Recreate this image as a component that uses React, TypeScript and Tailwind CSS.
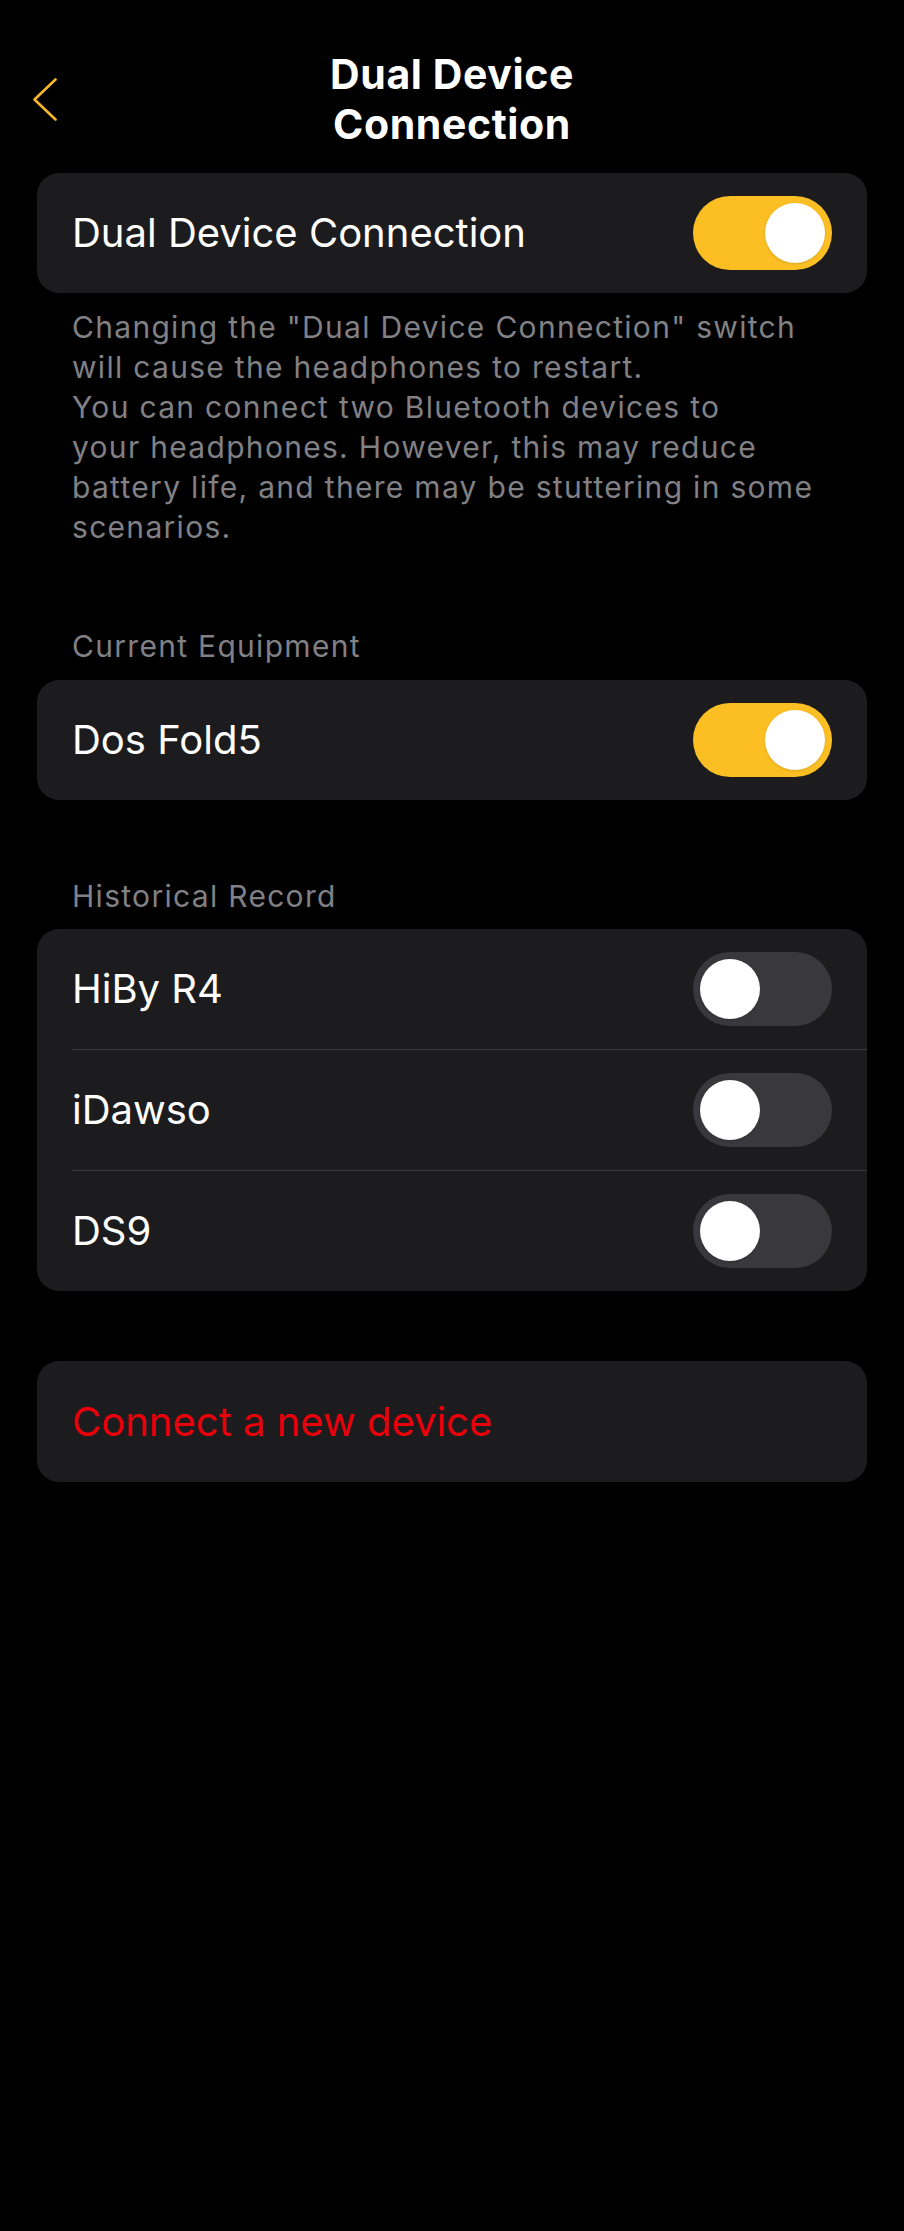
import React from "react";

type Device = { name: string; on: boolean };

const history: Device[] = [
  { name: "HiBy R4", on: false },
  { name: "iDawso", on: false },
  { name: "DS9", on: false },
];

const note = [
  'Changing the "Dual Device Connection" switch',
  "will cause the headphones to restart.",
  "You can connect two Bluetooth devices to",
  "your headphones. However, this may reduce",
  "battery life, and there may be stuttering in some",
  "scenarios.",
];

function Toggle({ on }: { on: boolean }) {
  return (
    <div
      className={
        on
          ? "flex h-[74px] w-[139px] shrink-0 items-center justify-end rounded-full bg-[#fbbf24] px-[7px]"
          : "flex h-[74px] w-[139px] shrink-0 items-center justify-start rounded-full bg-[#39393d] px-[7px]"
      }
    >
      <div className="h-[60px] w-[60px] rounded-full bg-white shadow-sm" />
    </div>
  );
}

function Row({ name, on }: Device) {
  return (
    <div className="flex h-[120px] items-center justify-between pl-[35px] pr-[35px]">
      <span className="text-[40px] leading-[48px] text-white">{name}</span>
      <Toggle on={on} />
    </div>
  );
}

export default function App() {
  return (
    <div
      className="min-h-[2231px] w-full bg-black pb-10"
      style={{ fontFamily: "Inter, 'Noto Sans', sans-serif" }}
    >
      {/* Header */}
      <header className="grid grid-cols-[1fr_auto_1fr] items-center pt-[49px]">
        <div className="pl-[33px]">
          <svg width="24" height="43" viewBox="0 0 24 43" fill="none">
            <polyline
              points="22.5,1.5 1.5,21.5 22.5,41.5"
              stroke="#f7b52a"
              strokeWidth="2.6"
              strokeLinecap="round"
              strokeLinejoin="round"
            />
          </svg>
        </div>
        <h1 className="text-center text-[41px] font-bold leading-[50px] tracking-[0.6px] text-white">
          Dual Device
          <br />
          Connection
        </h1>
        <div />
      </header>

      <div className="mx-[37px] mt-[24px]">
        {/* Main switch */}
        <div className="rounded-[22px] bg-[#1c1c1e]">
          <Row name="Dual Device Connection" on={true} />
        </div>
        <p className="mt-[14px] px-[35px] text-[30px] leading-[40px] tracking-[1.3px] text-[#808085]">
          {note.map((line) => (
            <span key={line} className="block whitespace-nowrap">
              {line}
            </span>
          ))}
        </p>

        {/* Current */}
        <h2 className="mt-[79px] px-[35px] text-[30px] leading-[40px] tracking-[1.3px] text-[#808085]">
          Current Equipment
        </h2>
        <div className="mt-[14px] rounded-[22px] bg-[#1c1c1e]">
          <Row name="Dos Fold5" on={true} />
        </div>

        {/* History */}
        <h2 className="mt-[76px] px-[35px] text-[30px] leading-[40px] tracking-[1.3px] text-[#808085]">
          Historical Record
        </h2>
        <div className="mt-[13px] overflow-hidden rounded-[22px] bg-[#1c1c1e]">
          {history.map((d, i) => (
            <div key={d.name}>
              {i > 0 && <div className="ml-[35px] h-px bg-[#3a3a3c]" />}
              <Row {...d} />
            </div>
          ))}
        </div>

        {/* Action */}
        <button className="mt-[70px] flex h-[121px] w-full items-center rounded-[22px] bg-[#1c1c1e] pl-[35px] text-left">
          <span className="text-[40px] leading-[48px] text-[#e8000b]">Connect a new device</span>
        </button>
      </div>
    </div>
  );
}
